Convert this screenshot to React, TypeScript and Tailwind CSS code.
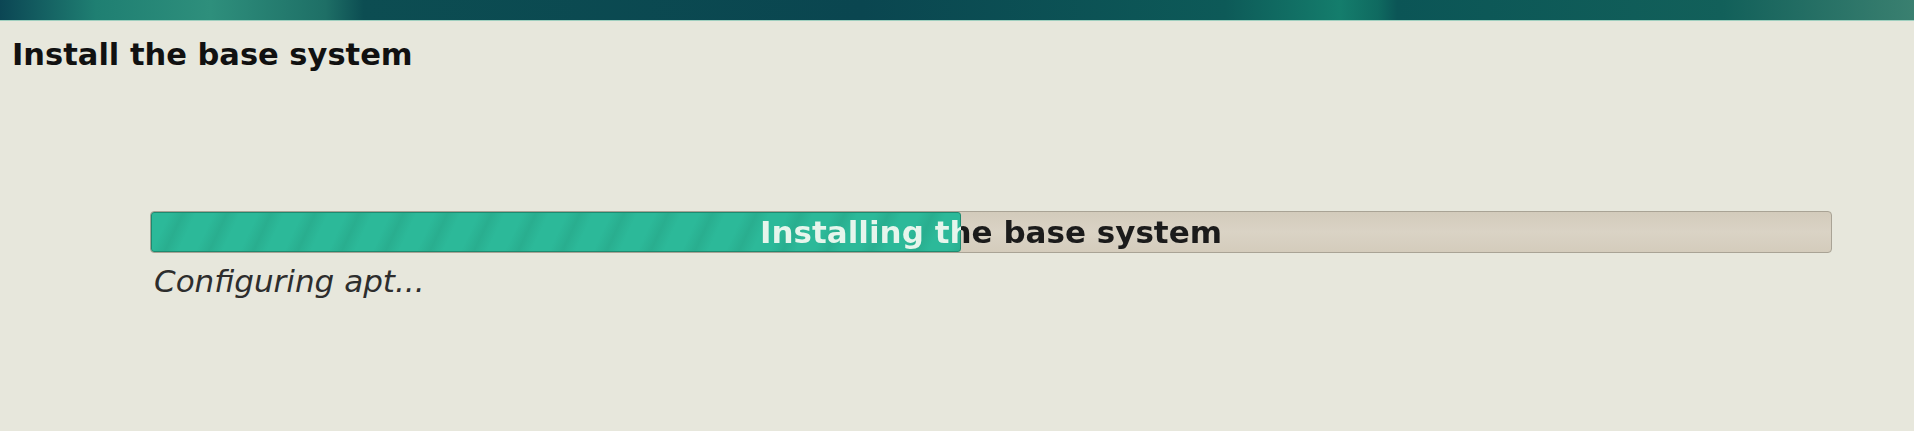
import React from 'react';

const progress = 48.2;
const label = 'Installing the base system';

const ProgressBar: React.FC<{ value: number; text: string }> = ({ value, text }) => {
  return (
    <div className="relative flex h-[42px] rounded-[4px] border border-[#a9a395] bg-[linear-gradient(to_bottom,#d3cbbb,#dad3c5_50%,#d4ccbc)]">
      <div
        className="h-full rounded-[3px] border border-[#1e8a70] bg-[repeating-linear-gradient(115deg,#2cb999_0px,#2cb999_16px,#29ae8f_28px,#2cb999_40px)]"
        style={{ width: `${value}%` }}
      />
      {/* label switches colour where the fill ends */}
      <div className="absolute inset-0 flex items-center justify-center">
        <span
          className="w-full bg-clip-text text-center text-[31px] font-bold leading-[36px] text-transparent"
          style={{ backgroundImage: `linear-gradient(to right, #e6f5ec ${value}%, #1b1b1b ${value}%)` }}
        >
          {text}
        </span>
      </div>
    </div>
  );
};

export default function App() {
  return (
    <div className="flex h-[431px] w-full flex-col bg-[#e7e7dc] font-['DejaVu_Sans',sans-serif]">
      <div className="h-[21px] border-b border-[#9fcfbf] bg-[linear-gradient(to_right,#0b4654_0%,#1f7f72_5%,#2e8f7c_11%,#1e6f66_17%,#0c4d52_19%,#0a4650_45%,#0d5a58_64%,#147d6c_70%,#0f6a60_72%,#0b5556_73%,#12605a_90%,#3a8070_100%)]" />
      <div className="px-[12px] pt-[16px] text-[30.5px] font-bold leading-[36px] text-[#111]">Install the base system</div>
      <div className="pl-[150px] pr-[82px] pt-[138px]">
        <ProgressBar value={progress} text={label} />
        <div className="pt-[10px] pl-[4px] text-[31px] italic leading-[36px] text-[#2d2d2d]">Configuring apt...</div>
      </div>
    </div>
  );
}
